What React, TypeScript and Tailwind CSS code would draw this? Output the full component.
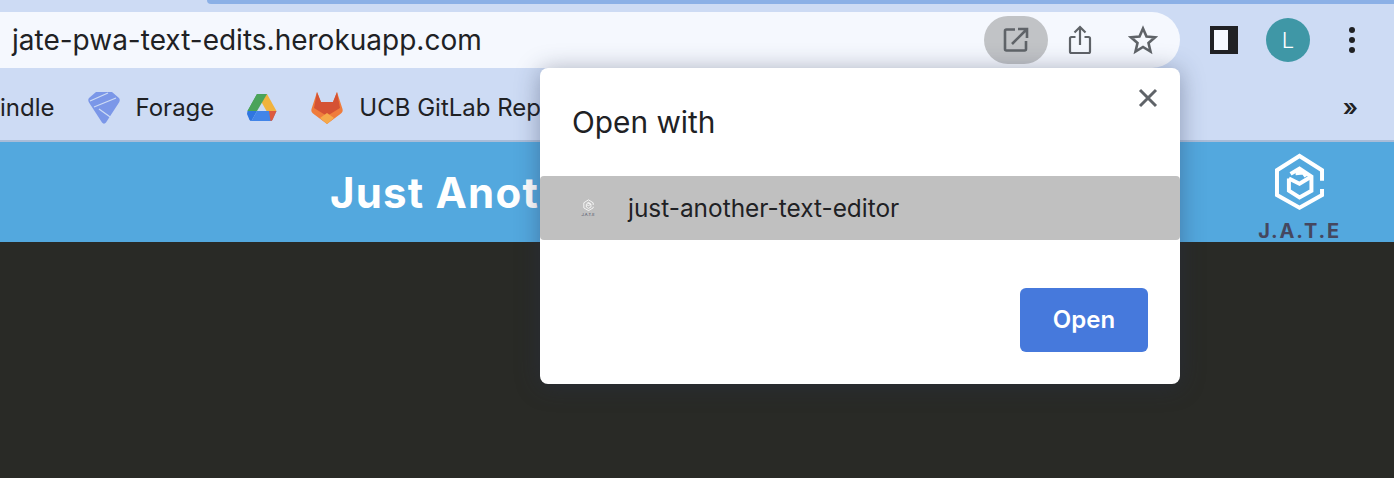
const font = { fontFamily: "Inter, 'Noto Sans', sans-serif" };

const ForageIcon = () => (
  <svg width="32" height="32" viewBox="0 0 32 32">
    <path d="M8 0H24L31 6C32 7 32 9 31 10.500L18 30.500C17 32 15 32 14 30.500L1 10.500C0 9 0 7 1 6Z" fill="#7b97e8" />
    <path d="M2 9L20 1M6 15L28 6M11 17L25 27" stroke="#cddbf4" strokeWidth="1.300" fill="none" />
  </svg>
);

const DriveIcon = () => (
  <svg width="30" height="28" viewBox="0 0 30 28">
    <path d="M10 0H20L29.500 17H19.500Z" fill="#f1b33e" />
    <path d="M10 0H15L5.500 17H0.500Z" fill="#4aa35a" />
    <path d="M10 0H20L10 17H0.500Z" fill="#4aa35a" />
    <path d="M10 17H29.500L24.500 27H4.500Z" fill="#4285e8" />
    <path d="M0.500 17H10L4.500 27C3.500 27 3 26.500 2.500 26L0 20Z" fill="#2f76e0" />
    <path d="M22 17H29.500L26 25C25.500 26.500 24.500 27 23.500 27Z" fill="#dc5a3e" />
  </svg>
);

const GitLabIcon = () => (
  <svg width="32" height="32" viewBox="0 0 32 32">
    <path d="M6 0L10 10H22L26 0L31.500 17C32 19 31.500 20 30 21.500L16 32L2 21.500C0.500 20 0 19 0.500 17Z" fill="#ef7c3c" />
    <path d="M6 0L10 10H22L26 0L29 16L16 24L3 16Z" fill="#d55233" />
    <path d="M9 26L16 21L23 26L16 32Z" fill="#f5a94a" />
  </svg>
);

const JateLogo = ({ size = 53 }: { size?: number }) => (
  <svg width={size} height={size * 1.125} viewBox="130 38 160 180" fill="none" stroke="#fff" strokeWidth="12">
    <path d="M278 125V93L210 50L142 93V168L210 206L278 168V150" />
    <path d="M178 118V155L210 175L246 155V112L210 88L183 104" />
    <path d="M178 118L210 134L246 112M198 102L222 100L230 112" />
  </svg>
);

export default function App() {
  return (
    <div style={font} className="relative h-[478px] w-[1394px] overflow-hidden bg-[#292a26]">
      {/* tab strip */}
      <div className="h-3 bg-[#cddbf4] pl-[207px]">
        <div className="h-1 rounded-bl-lg bg-[#8bb0e6]" />
      </div>

      {/* address bar */}
      <div className="flex h-14 items-center bg-[#cddbf4]">
        <div className="flex h-14 w-[1180px] items-center rounded-r-[28px] bg-[#f5f8fe] pl-3 pr-[22px]">
          <span className="text-[28px] leading-none text-[#202124]">jate-pwa-text-edits.herokuapp.com</span>
          <div className="ml-auto flex h-12 w-16 items-center justify-center rounded-full bg-[#c1c3c6]">
            <svg width="26" height="26" viewBox="0 0 26 26" fill="none" stroke="#5f6368" strokeWidth="2.600">
              <path d="M12 2.500H3.500C2.500 2.500 2 3 2 4V22C2 23 2.500 23.500 3.500 23.500H21.500C22.500 23.500 23 23 23 22V14M9 17L23 3M15 2H24V11" />
            </svg>
          </div>
          <svg className="ml-[20px]" width="24" height="30" viewBox="0 0 24 30" fill="none" stroke="#5f6368" strokeWidth="2.200">
            <path d="M7.500 12H3.500C2.500 12 2 12.500 2 13.500V26.500C2 27.500 2.500 28 3.500 28H20.500C21.500 28 22 27.500 22 26.500V13.500C22 12.500 21.500 12 20.500 12H16.500M12 20V2M6.500 7.500L12 2L17.500 7.500" />
          </svg>
          <svg className="ml-[36px]" width="30" height="30" viewBox="0 0 30 30" fill="none" stroke="#5f6368" strokeWidth="2.600">
            <path d="M15 3.500L18.500 11.500L27 12.300L20.500 18L22.500 26.500L15 22L7.500 26.500L9.500 18L3 12.300L11.500 11.500Z" />
          </svg>
        </div>
        <div className="ml-[30px] flex h-7 w-7 bg-[#202124] p-[4px]">
          <div className="h-5 w-[14px] bg-[#f5f8fe]" />
        </div>
        <div className="ml-7 flex h-11 w-11 items-center justify-center rounded-full bg-[#3f97a6] text-[22px] font-light text-white">
          L
        </div>
        <div className="ml-[39px] flex flex-col gap-1">
          <div className="h-[6px] w-[6px] rounded-full bg-[#202124]" />
          <div className="h-[6px] w-[6px] rounded-full bg-[#202124]" />
          <div className="h-[6px] w-[6px] rounded-full bg-[#202124]" />
        </div>
      </div>

      {/* bookmarks */}
      <div className="flex h-[74px] items-center border-b-2 border-[#a9bcd8] bg-[#cddbf4] pt-2 text-[24px] text-[#202124]">
        <span>indle</span>
        <div className="ml-[33px]"><ForageIcon /></div>
        <span className="ml-4">Forage</span>
        <div className="ml-[33px]"><DriveIcon /></div>
        <div className="ml-[34px]"><GitLabIcon /></div>
        <span className="ml-4 whitespace-nowrap">UCB GitLab Rep</span>
        <span className="ml-auto mr-[36px] text-[24px] font-semibold">»</span>
      </div>

      {/* page header */}
      <div className="relative flex h-[100px] items-center bg-[#53a8de] pl-[330px]">
        <div className="w-[210px] overflow-hidden">
          <h1 className="whitespace-nowrap text-[42px] font-bold tracking-[1.200px] text-white">Just Anot</h1>
        </div>
        <div className="absolute right-[53px] top-[10px] flex flex-col items-center">
          <JateLogo />
          <span className="mt-[9px] text-[20px] font-bold leading-none tracking-[1.800px] text-[#45475f]">J.A.T.E</span>
        </div>
      </div>

      {/* open with bubble */}
      <div className="absolute left-[540px] top-[68px] h-[316px] w-[640px] rounded-lg bg-white shadow-[0_2px_24px_rgba(40,50,80,0.4)]">
        <svg className="absolute right-[22px] top-[20px]" width="20" height="20" viewBox="0 0 20 20" stroke="#5f6368" strokeWidth="3">
          <path d="M2 2L18 18M18 2L2 18" />
        </svg>
        <h2 className="pl-8 pt-[34px] text-[29.800px] leading-10 text-[#202124]">Open with</h2>
        <div className="mt-[34px] flex h-16 items-center rounded bg-[#c0c0c0] pl-[40px] text-[24.400px] text-[#202124]">
          <div className="flex w-4 flex-col items-center">
            <JateLogo size={11} />
            <span className="mt-px text-[4px] leading-none text-[#45475f]">J.A.T.E</span>
          </div>
          <span className="ml-[32px]">just-another-text-editor</span>
        </div>
        <div className="mt-12 flex justify-end pr-8">
          <button className="h-16 w-32 rounded-md bg-[#4679dc] text-[24px] font-semibold text-white">Open</button>
        </div>
      </div>
    </div>
  );
}
